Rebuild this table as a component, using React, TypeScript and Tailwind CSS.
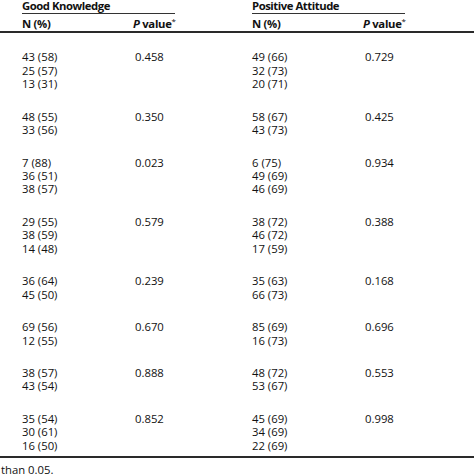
import React from "react";

const groups: { gk: string[]; gp: string; pa: string[]; pp: string }[] = [
  { gk: ["43 (58)", "25 (57)", "13 (31)"], gp: "0.458", pa: ["49 (66)", "32 (73)", "20 (71)"], pp: "0.729" },
  { gk: ["48 (55)", "33 (56)"], gp: "0.350", pa: ["58 (67)", "43 (73)"], pp: "0.425" },
  { gk: ["7 (88)", "36 (51)", "38 (57)"], gp: "0.023", pa: ["6 (75)", "49 (69)", "46 (69)"], pp: "0.934" },
  { gk: ["29 (55)", "38 (59)", "14 (48)"], gp: "0.579", pa: ["38 (72)", "46 (72)", "17 (59)"], pp: "0.388" },
  { gk: ["36 (64)", "45 (50)"], gp: "0.239", pa: ["35 (63)", "66 (73)"], pp: "0.168" },
  { gk: ["69 (56)", "12 (55)"], gp: "0.670", pa: ["85 (69)", "16 (73)"], pp: "0.696" },
  { gk: ["38 (57)", "43 (54)"], gp: "0.888", pa: ["48 (72)", "53 (67)"], pp: "0.553" },
  { gk: ["35 (54)", "30 (61)", "16 (50)"], gp: "0.852", pa: ["45 (69)", "34 (69)", "22 (69)"], pp: "0.998" },
];

function PValue() {
  return (
    <span className="font-bold tracking-[-0.3px]">
      <span className="italic">P</span> value
      <span className="text-[8px] relative -top-[4px] font-normal">*</span>
    </span>
  );
}

export default function App() {
  return (
    <div
      className="w-[474px] h-[474px] overflow-hidden bg-white text-[#111] text-[11.3px] leading-[13.3px] font-medium"
      style={{ fontFamily: '"Open Sans", "Noto Sans", sans-serif' }}
    >
      {/* header row 1 */}
      <div className="flex pl-[22px] -mt-[1px]">
        <div className="w-[230px]">
          <div className="w-[153px] h-[15px] border-b border-[#333] font-bold leading-[13px] tracking-[-0.45px]">Good Knowledge</div>
        </div>
        <div className="w-[153px] h-[15px] border-b border-[#333] font-bold leading-[13px] tracking-[-0.45px]">Positive Attitude</div>
      </div>
      {/* header row 2 */}
      <div className="flex pl-[22px] h-[19px] pt-[3px] border-b-2 border-[#2a2a2a]">
        <div className="w-[111px] font-bold tracking-[-0.3px]">N (%)</div>
        <div className="w-[119px]">
          <PValue />
        </div>
        <div className="w-[111px] font-bold tracking-[-0.3px]">N (%)</div>
        <div>
          <PValue />
        </div>
      </div>
      {/* body */}
      <div className="flex flex-col gap-[19.4px] pt-[17.4px] pb-[4px] border-b-2 border-[#2a2a2a]">
        {groups.map((g, i) => (
          <div key={i} className="flex pl-[22px]">
            <div className="w-[113px] flex flex-col">
              {g.gk.map((t) => (
                <div key={t}>{t}</div>
              ))}
            </div>
            <div className="w-[117px]">{g.gp}</div>
            <div className="w-[113px] flex flex-col">
              {g.pa.map((t) => (
                <div key={t}>{t}</div>
              ))}
            </div>
            <div>{g.pp}</div>
          </div>
        ))}
      </div>
      <div className="pt-[5px] pl-[1px]">than 0.05.</div>
    </div>
  );
}
